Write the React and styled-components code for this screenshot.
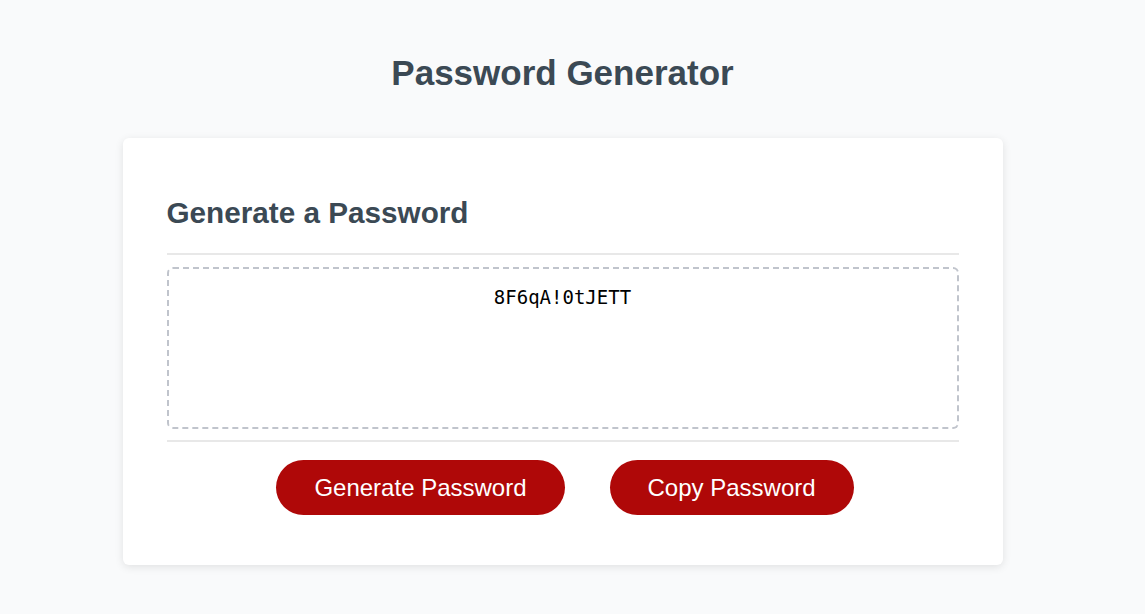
import React from "react";
import styled, { createGlobalStyle } from "styled-components";

const GlobalStyle = createGlobalStyle`
  * {
    box-sizing: border-box;
  }
  body {
    margin: 0;
    background: #f9fafb;
    font-family: "Liberation Sans", Arial, sans-serif;
  }
`;

const Page = styled.div`
  padding: 53px 20px 48px 0;
`;

const Title = styled.h1`
  margin: 0 0 45px;
  text-align: center;
  font-size: 35px;
  font-weight: 700;
  color: hsl(206, 17%, 28%);
`;

const Card = styled.div`
  width: 880px;
  margin: 0 auto;
  padding: 58px 44px 50px;
  background: #fff;
  border-radius: 6px;
  box-shadow: 0 2px 8px rgba(0, 0, 0, 0.1);
`;

const CardHeader = styled.div`
  padding-bottom: 23px;
  border-bottom: 2px solid #e8e8e8;

  h2 {
    margin: 0;
    font-size: 29.7px;
    font-weight: 700;
    color: hsl(206, 17%, 28%);
  }
`;

const CardBody = styled.div`
  padding: 12px 0 11px;
`;

const Output = styled.textarea`
  display: block;
  width: 100%;
  height: 162px;
  padding: 17px 10px;
  border: 2px dashed #c0c4cc;
  border-radius: 6px;
  resize: none;
  outline: none;
  background: #fff;
  text-align: center;
  font-family: "DejaVu Sans Mono", "Liberation Mono", monospace;
  font-size: 19px;
  line-height: 22px;
  color: #000;
`;

const CardFooter = styled.div`
  display: flex;
  justify-content: center;
  gap: 45px;
  padding: 18px 0 0 5px;
  border-top: 2px solid #e8e8e8;
`;

const Button = styled.button`
  height: 55px;
  padding: 0 38px;
  border: none;
  border-radius: 28px;
  background: hsl(360, 91%, 36%);
  color: #fff;
  font-family: "Liberation Sans", Arial, sans-serif;
  font-size: 24px;
  cursor: pointer;
`;

const App = () => {
  return (
    <React.Fragment>
      <GlobalStyle />
      <Page>
        <Title>Password Generator</Title>
        <Card>
          <CardHeader>
            <h2>Generate a Password</h2>
          </CardHeader>
          <CardBody>
            <Output readOnly value="8F6qA!0tJETT" aria-label="Generated Password" />
          </CardBody>
          <CardFooter>
            <Button>Generate Password</Button>
            <Button>Copy Password</Button>
          </CardFooter>
        </Card>
      </Page>
    </React.Fragment>
  );
};

export default App;
